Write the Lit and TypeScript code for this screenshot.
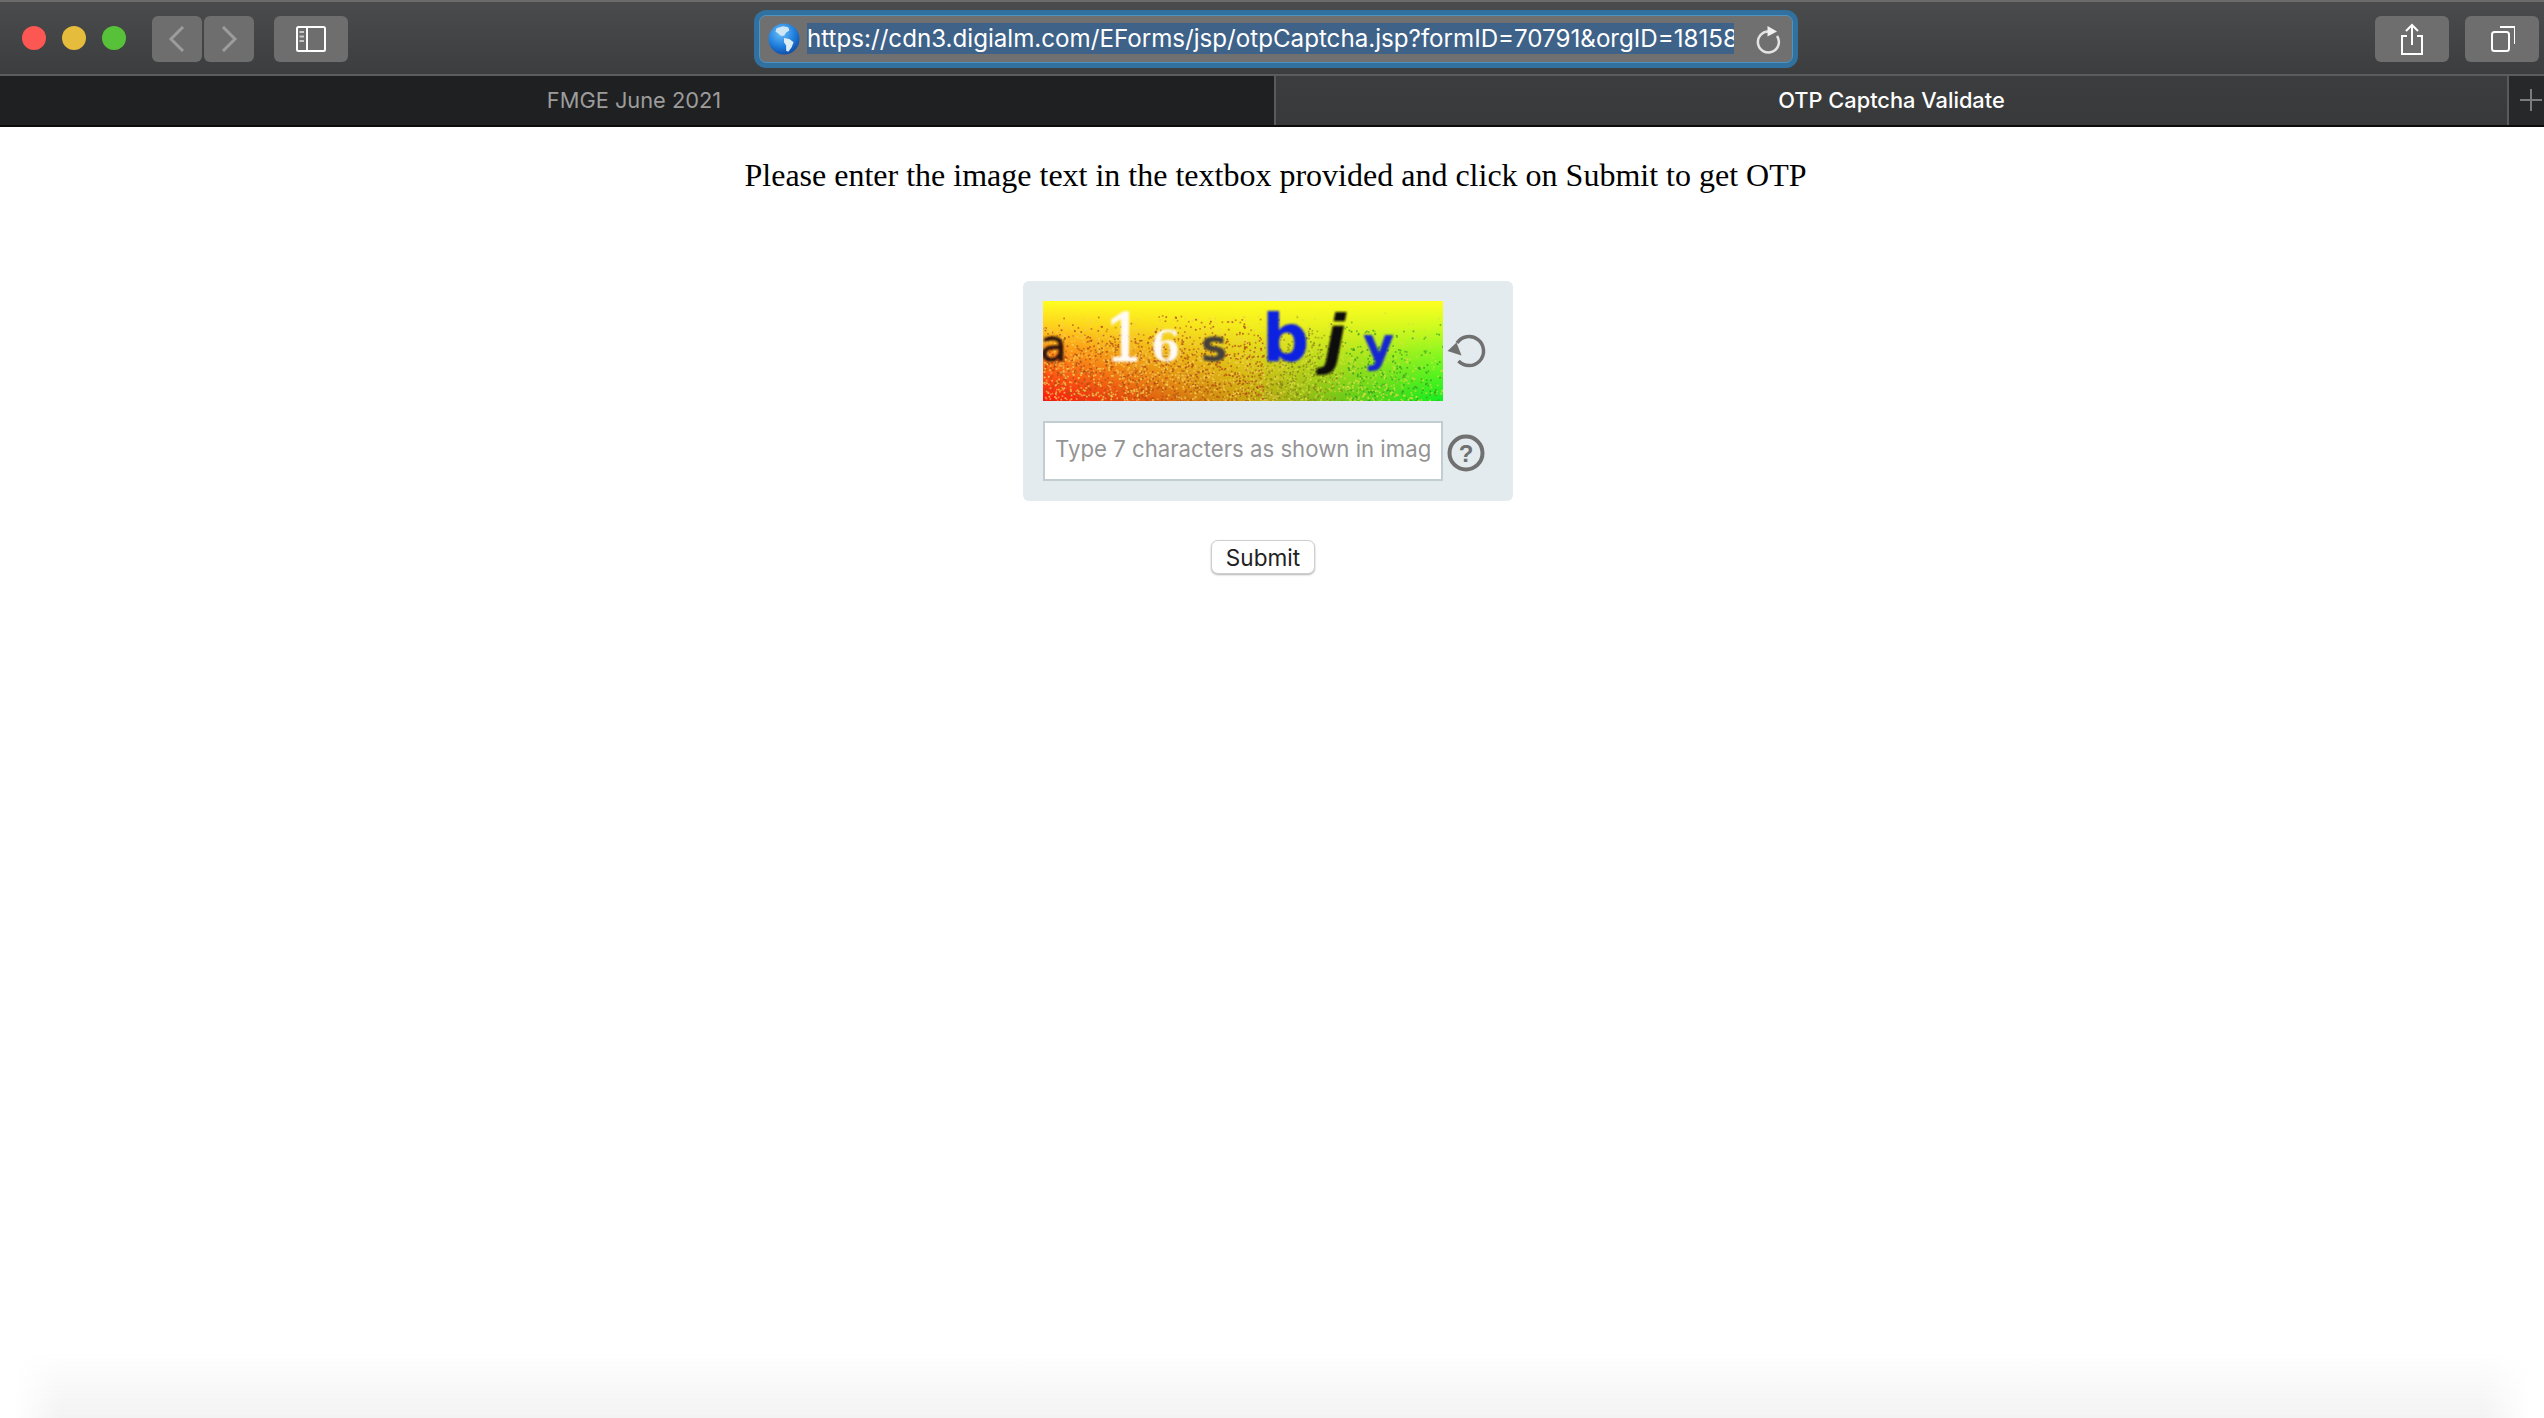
import { LitElement, html, css, svg } from "lit";
import { customElement } from "lit/decorators.js";

const speck = (() => {
  let s = 70791;
  const r = () => ((s = (s * 1664525 + 1013904223) >>> 0) / 4294967296);
  const out: { x: number; y: number; c: string; o: number }[] = [];
  for (let i = 0; i < 7000; i++) {
    const x = r() * 400;
    const y = r() * 100;
    const d = Math.min(1, Math.max(0, (y - 10) / 45)) * (1 - Math.max(0, (x - 250) / 170) * (1 - Math.max(0, (y - 60) / 60)));
    if (r() > d * 0.8) continue;
    const t = x / 400;
    const bright = r() > 0.5;
    const c = bright
      ? t < 0.6 ? "#f2d050" : "#d8e040"
      : t < 0.55 ? "#b04c14" : t < 0.75 ? "#86841a" : "#36a024";
    out.push({ x, y, c, o: 0.5 + r() * 0.4 });
  }
  return out;
})();

@customElement("app-root")
export class AppRoot extends LitElement {
  static styles = css`
    :host { display: block; width: 2544px; height: 1418px; position: relative; overflow: hidden; background: #fff; font-family: Inter, "Liberation Sans", sans-serif; }
    .toolbar { height: 74px; box-sizing: border-box; border-top: 2px solid #6b6b6c; background: linear-gradient(#4a4b4c, #3c3d3e); display: flex; align-items: center; padding: 0 5px 0 22px; }
    .lights { display: flex; gap: 16px; }
    .dot { width: 24px; height: 24px; border-radius: 50%; }
    .red { background: #fc5753; } .yellow { background: #e6bc3c; } .green { background: #58c13a; }
    .tbtn { height: 46px; background: #6e6e6f; border-radius: 6px; display: flex; align-items: center; justify-content: center; flex: none; margin-top: 1px; }
    .nav { display: flex; gap: 2px; margin-left: 26px; }
    .navb { width: 50px; }
    .side { width: 74px; margin-left: 20px; }
    .url { margin-left: 406px; width: 1044px; height: 58px; box-sizing: border-box; padding: 5px; background: #31719f; border-radius: 12px; margin-top: 1px; flex: none; }
    .urlin { height: 100%; box-sizing: border-box; background: #707071; border: 1px solid #4f93c0; border-radius: 7px; display: flex; align-items: center; padding-left: 8px; }
    .globe { flex: none; }
    .urltext { margin-left: 7px; width: 927px; height: 31px; line-height: 32px; background: #3f6288; color: #fff; font-size: 24.15px; white-space: nowrap; overflow: hidden; flex: none; }
    .reload { margin-left: 21px; flex: none; }
    .right { margin-left: auto; display: flex; gap: 16px; }
    .rb { width: 74px; }
    .tabs { height: 53px; box-sizing: border-box; border-top: 2px solid #5c5c5d; border-bottom: 2px solid #0c0c0c; display: flex; font-size: 21.8px; }
    .tab { display: flex; align-items: center; justify-content: center; padding-bottom: 1px; }
    .t1 { width: 1274px; box-sizing: border-box; padding-right: 6px; background: #1f2021; color: #9c9c9c; }
    .t2 { flex: 1; background: linear-gradient(#3c3d3e, #38393a); color: #fff; font-weight: 500; border-left: 2px solid #5a5a5a; border-right: 2px solid #5a5a5a; }
    .t3 { width: 35px; box-sizing: border-box; padding-left: 9px; background: #27282a; }
    main { display: flex; flex-direction: column; align-items: center; padding-top: 28px; }
    h1 { margin: 0 0 0 7px; font: 400 32px/40px "Liberation Serif", serif; color: #000; }
    .panel { width: 490px; height: 220px; box-sizing: border-box; margin: 86px 8px 0 0; padding: 20px 0 0 20px; background: #e4ebee; border-radius: 6px; }
    .row { display: flex; align-items: center; }
    .row + .row { margin-top: 20px; }
    .cap { display: block; flex: none; }
    .ico1 { margin-left: 4px; flex: none; }
    .ico2 { margin: 3px 0 0 3px; flex: none; }
    input { width: 400px; height: 60px; box-sizing: border-box; border: 2px solid #c2cdd2; padding: 0 11px 5px 10px; background: #fff; font: 400 22.2px Inter, sans-serif; outline: none; border-radius: 0; flex: none; }
    input::placeholder { color: #949494; opacity: 1; }
    button { margin: 39px 18px 0 0; width: 104px; height: 34px; box-sizing: border-box; padding: 0; background: #fff; border: 1px solid #cfcfcf; border-radius: 7px; box-shadow: 0 1px 2px rgba(0,0,0,.3); color: #222; font: 400 22.6px Inter, sans-serif; }
    .shade { position: absolute; left: 0; right: 0; bottom: 0; height: 68px; background: linear-gradient(rgba(243,243,243,0), #f3f3f3); -webkit-mask-image: linear-gradient(90deg, transparent 14px, #000 60px, #000 calc(100% - 60px), transparent calc(100% - 14px)); mask-image: linear-gradient(90deg, transparent 14px, #000 60px, #000 calc(100% - 60px), transparent calc(100% - 14px)); pointer-events: none; }
  `;

  private captcha() {
    return html`<svg class="cap" width="400" height="100" viewBox="0 0 400 100">
      <defs>
        <linearGradient id="h"><stop offset="0" stop-color="#ff1010"/><stop offset=".5" stop-color="#c8a010"/><stop offset="1" stop-color="#10f020"/></linearGradient>
        <linearGradient id="v" x2="0" y2="1"><stop offset="0" stop-color="#ffff20"/><stop offset=".25" stop-color="#ffff20" stop-opacity=".8"/><stop offset="1" stop-color="#ffff20" stop-opacity="0"/></linearGradient>
        <filter id="soft" x="-5%" y="-5%" width="110%" height="110%"><feGaussianBlur stdDeviation=".7"/></filter>
        <filter id="softt" x="-20%" y="-20%" width="140%" height="140%"><feGaussianBlur stdDeviation=".8"/></filter>
        <clipPath id="cl"><rect width="400" height="100"/></clipPath>
      </defs>
      <g clip-path="url(#cl)">
        <rect width="400" height="100" fill="url(#h)"/>
        <rect width="400" height="100" fill="url(#v)"/>
        <g filter="url(#soft)">
          ${speck.map((p) => svg`<rect x=${p.x.toFixed(1)} y=${p.y.toFixed(1)} width="1.7" height="1.7" fill=${p.c} fill-opacity=${p.o.toFixed(2)}/>`)}
        </g>
        <g filter="url(#softt)">
          <text x="-3" y="60" font-family="DejaVu Sans" font-size="44" stroke="#2c120a" stroke-width=".6" fill="#2c120a">a</text>
          <text x="61" y="60" font-family="DejaVu Serif" font-size="66" fill="#fffaf4" stroke="#fffaf4" stroke-width="1.5">1</text>
          <text x="108" y="60" font-family="DejaVu Serif" font-weight="700" font-size="42" fill="#fffaf4">6</text>
          <text x="158" y="60" font-family="DejaVu Sans" font-weight="700" font-size="44" fill="#45403a">s</text>
          <text x="219" y="60" font-family="DejaVu Sans" font-weight="700" font-size="66" fill="#1020e0">b</text>
          <text x="281" y="60" font-family="DejaVu Sans" font-weight="700" font-style="italic" font-size="64" fill="#080808">j</text>
          <text x="320" y="60" font-family="DejaVu Sans" font-weight="700" font-size="48" fill="#1828d0">y</text>
        </g>
      </g>
    </svg>`;
  }

  render() {
    return html`
      <div class="toolbar">
        <div class="lights"><div class="dot red"></div><div class="dot yellow"></div><div class="dot green"></div></div>
        <div class="nav">
          <div class="tbtn navb"><svg width="18" height="26" viewBox="0 0 18 26"><path d="M15 1 L3 13 L15 25" fill="none" stroke="#9c9c9c" stroke-width="3"/></svg></div>
          <div class="tbtn navb"><svg width="18" height="26" viewBox="0 0 18 26"><path d="M3 1 L15 13 L3 25" fill="none" stroke="#9c9c9c" stroke-width="3"/></svg></div>
        </div>
        <div class="tbtn side"><svg width="30" height="26" viewBox="0 0 30 26"><rect x="1" y="1" width="28" height="24" rx="1.5" fill="none" stroke="#fff" stroke-width="2"/><path d="M11 1V25" stroke="#fff" stroke-width="2"/><path d="M3.5 6H8M3.5 10.500H8M3.5 15H8" stroke="#c8c8c8" stroke-width="2"/></svg></div>
        <div class="url"><div class="urlin">
          <svg class="globe" width="32" height="32" viewBox="0 0 30 30">
            <defs><radialGradient id="gl" cx=".4" cy=".3" r=".8"><stop offset="0" stop-color="#6cc0f6"/><stop offset=".55" stop-color="#1f7fde"/><stop offset="1" stop-color="#0b3f96"/></radialGradient></defs>
            <circle cx="15" cy="15" r="14.500" fill="url(#gl)"/>
            <path d="M8 5 L14 3 L19 4 L20 7 L17 9 L15 12 L12 12 L10 10 L7 8 Z" fill="#cfe6f5"/>
            <path d="M15 14 L20 15 L24 18 L22 23 L19 27 L17 26 L17 21 L15 18 Z" fill="#dcecf5"/>
          </svg>
          <div class="urltext">https://cdn3.digialm.com/EForms/jsp/otpCaptcha.jsp?formID=70791&orgID=18158</div>
          <svg class="reload" width="26" height="30" viewBox="0 0 26 30"><path d="M13.500 7.500 A10.500 10.500 0 1 0 22 12" fill="none" stroke="#e4e4e4" stroke-width="2.500"/><path d="M12.500 2 L22 7.500 L12.500 12.500 Z" fill="#f0f0f0"/></svg>
        </div></div>
        <div class="right">
          <div class="tbtn rb"><svg width="24" height="32" viewBox="0 0 24 32"><path d="M7 13H2V31H22V13H17" fill="none" stroke="#fff" stroke-width="2"/><path d="M12 22V2M6 8L12 2L18 8" fill="none" stroke="#fff" stroke-width="2"/></svg></div>
          <div class="tbtn rb"><svg width="26" height="28" viewBox="-2 0 26 28"><rect x="1" y="7" width="17" height="19" rx="2.500" fill="none" stroke="#fff" stroke-width="2"/><path d="M9 2H24V19" fill="none" stroke="#fff" stroke-width="2"/></svg></div>
        </div>
      </div>
      <div class="tabs">
        <div class="tab t1">FMGE June 2021</div>
        <div class="tab t2">OTP Captcha Validate</div>
        <div class="tab t3"><svg width="24" height="24" viewBox="0 0 24 24"><path d="M12 1V23M1 12H23" stroke="#7c7c7c" stroke-width="2"/></svg></div>
      </div>
      <main>
        <h1>Please enter the image text in the textbox provided and click on Submit to get OTP</h1>
        <div class="panel">
          <div class="row">
            ${this.captcha()}
            <svg class="ico1" width="40" height="40" viewBox="0 0 40 40"><path d="M10 12 A14.500 14.500 0 1 1 11.500 30" fill="none" stroke="#707070" stroke-width="3.500"/><path d="M0.500 20 L9.500 11.500 L14.500 24.500 Z" fill="#707070"/></svg>
          </div>
          <div class="row">
            <input type="text" placeholder="Type 7 characters as shown in image" />
            <svg class="ico2" width="40" height="40" viewBox="0 0 40 40"><circle cx="20" cy="20" r="16.500" fill="none" stroke="#707070" stroke-width="4"/><text x="20" y="28.500" text-anchor="middle" font-family="Liberation Sans" font-weight="700" font-size="24" fill="#707070">?</text></svg>
          </div>
        </div>
        <button>Submit</button>
      </main>
      <div class="shade"></div>
    `;
  }
}
